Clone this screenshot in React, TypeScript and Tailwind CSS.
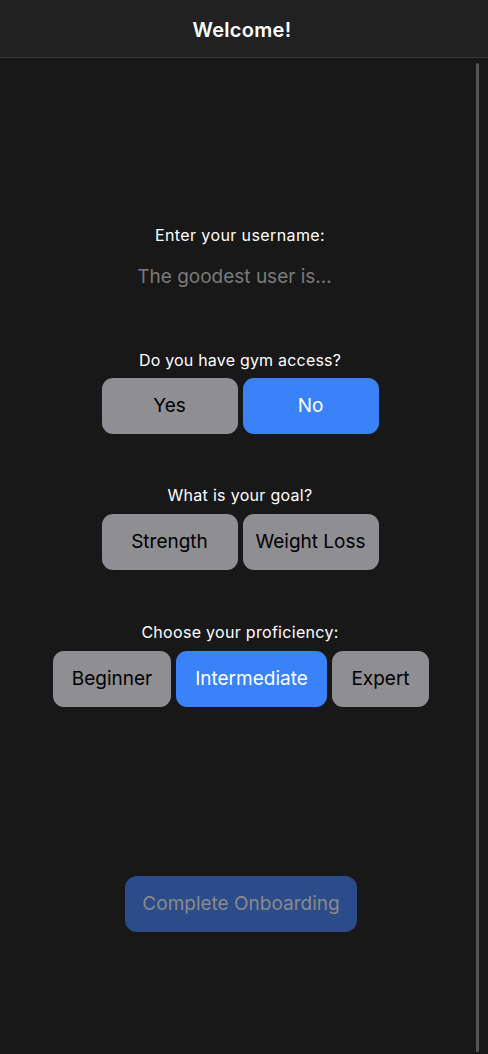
import React, { useState } from 'react';

type Option = { label: string; width: string };

const gymOptions: Option[] = [
    { label: 'Yes', width: 'w-[136px]' },
    { label: 'No', width: 'w-[136px]' },
];

const goalOptions: Option[] = [
    { label: 'Strength', width: 'w-[136px]' },
    { label: 'Weight Loss', width: 'w-[136px]' },
];

const levelOptions: Option[] = [
    { label: 'Beginner', width: 'w-[118px]' },
    { label: 'Intermediate', width: 'w-[151px]' },
    { label: 'Expert', width: 'w-[97px]' },
];

function Choice({ options, value, onChange }: { options: Option[]; value: string | null; onChange: (v: string) => void }) {
    return (
        <div className="flex justify-center gap-[5px]">
            {options.map((o) => (
                <button
                    key={o.label}
                    onClick={() => onChange(o.label)}
                    className={`${o.width} h-[56px] rounded-[11px] pt-[1px] text-[19px] ${
                        value === o.label ? 'bg-[#3a82f7] text-white' : 'bg-[#8e8e93] text-black'
                    }`}
                >
                    {o.label}
                </button>
            ))}
        </div>
    );
}

export default function App() {
    const [username, setUsername] = useState('');
    const [gym, setGym] = useState<string | null>('No');
    const [goal, setGoal] = useState<string | null>(null);
    const [level, setLevel] = useState<string | null>('Intermediate');

    const ready = username.length > 0 && gym && goal && level;

    return (
        <div className="relative flex h-[1054px] flex-col bg-[#181818] font-['Inter',sans-serif] text-white">
            <header className="flex h-[58px] shrink-0 items-center justify-center border-b border-[#393939] bg-[#212121] pr-[4px] pt-[3px]">
                <h1 className="text-[20px] font-semibold tracking-[0.3px]">Welcome!</h1>
            </header>

            <main className="flex flex-col items-center pr-[8px] pt-[166px]">
                <p className="text-[16px] leading-[22px] tracking-[0.4px]">Enter your username:</p>
                <input
                    value={username}
                    onChange={(e) => setUsername(e.target.value)}
                    placeholder="The goodest user is..."
                    className="mr-[11px] mt-[19px] w-[260px] bg-transparent text-center text-[19px] leading-[24px] text-white outline-none placeholder:text-[#7a7a7a]"
                />

                <p className="mt-[60px] text-[16px] leading-[22px] tracking-[0.2px]">Do you have gym access?</p>
                <div className="mt-[7px]">
                    <Choice options={gymOptions} value={gym} onChange={setGym} />
                </div>

                <p className="mt-[50px] text-[16px] leading-[22px] tracking-[0.3px]">What is your goal?</p>
                <div className="mt-[8px]">
                    <Choice options={goalOptions} value={goal} onChange={setGoal} />
                </div>

                <p className="mt-[51px] text-[16px] leading-[22px] tracking-[0.3px]">Choose your proficiency:</p>
                <div className="ml-[2px] mt-[8px]">
                    <Choice options={levelOptions} value={level} onChange={setLevel} />
                </div>

                <button
                    disabled={!ready}
                    className={`ml-[2px] mt-[169px] h-[56px] w-[232px] rounded-[12px] text-[19px] ${
                        ready ? 'bg-[#3a82f7] text-white' : 'bg-[#2b4b8b] text-[#8a8a8a]'
                    }`}
                >
                    Complete Onboarding
                </button>
            </main>

            {/* scroll indicator */}
            <div className="absolute right-[9px] top-[63px] h-[989px] w-[3px] rounded-full bg-[#555555]" />
        </div>
    );
}
